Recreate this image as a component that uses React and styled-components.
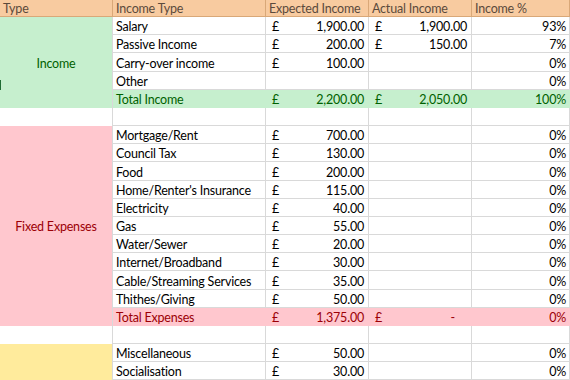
import React from "react";
import styled, { createGlobalStyle, css } from "styled-components";

const Global = createGlobalStyle`
  html, body { margin: 0; padding: 0; background: #fff; overflow: hidden; }
  body { font-family: Lato, "Liberation Sans", sans-serif; }
`;

const tones = {
  none: { bg: "#ffffff", fg: "#000000", line: "#d9d9d9" },
  good: { bg: "#c6efce", fg: "#006100", line: "#c6efce" },
  bad: { bg: "#ffc7ce", fg: "#9c0006", line: "#ffc7ce" },
  neutral: { bg: "#ffeb9c", fg: "#9c5700", line: "#ffeb9c" },
};

// Spreadsheet rows are ~18.17px tall; round each boundary to whole pixels.
const ROW_H = 18.17;
const HEAD_H = 17;
const rowTracks = Array.from({ length: 21 }, (_, k) => {
  const top = Math.round(HEAD_H + ROW_H * k);
  const bottom = Math.round(HEAD_H + ROW_H * (k + 1));
  return `${bottom - top}px`;
}).join(" ");

const Frame = styled.div`
  width: 570px;
  height: 380px;
  overflow: hidden;
`;

const Sheet = styled.div`
  display: grid;
  grid-template-columns: 113px 153px 103px 103px 98px;
  grid-template-rows: ${HEAD_H}px ${rowTracks};
  width: 570px;
  font-size: 12.5px;
  letter-spacing: -0.2px;
  color: #000;
`;

const HeaderCell = styled.div`
  box-sizing: border-box;
  background: #f8cba0;
  color: #5b4a3c;
  border-right: 1px solid #d9a878;
  border-bottom: 1px solid #d9a878;
  padding: 1px 3px 0;
  display: flex;
  align-items: center;
  white-space: nowrap;
  overflow: hidden;
`;

const TypeCell = styled.div`
  position: relative;
  box-sizing: border-box;
  grid-column: 1;
  grid-row: ${(p) => p.$row} / span ${(p) => p.$span};
  background: ${(p) => tones[p.$tone].bg};
  color: ${(p) => tones[p.$tone].fg};
  border-right: 1px solid #d9d9d9;
  padding-top: 1px;
  display: flex;
  align-items: center;
  justify-content: center;
  white-space: nowrap;
  ${(p) =>
    p.$marker &&
    css`
      &::before {
        content: "";
        position: absolute;
        left: 0;
        top: ${p.$marker}px;
        width: 1px;
        height: 10px;
        background: #1f6b34;
      }
    `}
`;

const Cell = styled.div`
  box-sizing: border-box;
  background: ${(p) => tones[p.$tone].bg};
  color: ${(p) => tones[p.$tone].fg};
  border-right: 1px solid ${(p) => tones[p.$tone].line};
  border-bottom: 1px solid ${(p) => tones[p.$tone].line};
  padding: 2px 3px 0;
  display: flex;
  align-items: center;
  justify-content: ${(p) => (p.$right ? "flex-end" : "flex-start")};
  white-space: nowrap;
  overflow: hidden;
`;

const Money = styled(Cell)`
  justify-content: space-between;
  padding: 2px 4px 0 6px;
`;

const Dash = styled.span`
  padding-right: 12px;
`;

const MoneyCell = ({ value, tone }) => (
  <Money $tone={tone}>
    {value !== null && value !== undefined ? (
      <>
        <span>£</span>
        {value === "-" ? <Dash>-</Dash> : <span>{value}</span>}
      </>
    ) : null}
  </Money>
);

const Row = ({ label, expected, actual, pct, tone = "none" }) => (
  <>
    <Cell $tone={tone}>{label}</Cell>
    <MoneyCell value={expected} tone={tone} />
    <MoneyCell value={actual} tone={tone} />
    <Cell $tone={tone} $right>
      {pct}
    </Cell>
  </>
);

const income = [
  { label: "Salary", expected: "1,900.00", actual: "1,900.00", pct: "93%" },
  { label: "Passive Income", expected: "200.00", actual: "150.00", pct: "7%" },
  { label: "Carry-over income", expected: "100.00", pct: "0%" },
  { label: "Other", pct: "0%" },
  { label: "Total Income", expected: "2,200.00", actual: "2,050.00", pct: "100%", tone: "good" },
];

const fixed = [
  { label: "Mortgage/Rent", expected: "700.00", pct: "0%" },
  { label: "Council Tax", expected: "130.00", pct: "0%" },
  { label: "Food", expected: "200.00", pct: "0%" },
  { label: "Home/Renter's Insurance", expected: "115.00", pct: "0%" },
  { label: "Electricity", expected: "40.00", pct: "0%" },
  { label: "Gas", expected: "55.00", pct: "0%" },
  { label: "Water/Sewer", expected: "20.00", pct: "0%" },
  { label: "Internet/Broadband", expected: "30.00", pct: "0%" },
  { label: "Cable/Streaming Services", expected: "35.00", pct: "0%" },
  { label: "Thithes/Giving", expected: "50.00", pct: "0%" },
  { label: "Total Expenses", expected: "1,375.00", actual: "-", pct: "0%", tone: "bad" },
];

const variable = [
  { label: "Miscellaneous", expected: "50.00", pct: "0%" },
  { label: "Socialisation", expected: "30.00", pct: "0%" },
];

export default function App() {
  return (
    <>
      <Global />
      <Frame>
        <Sheet>
          <HeaderCell>Type</HeaderCell>
          <HeaderCell>Income Type</HeaderCell>
          <HeaderCell>Expected Income</HeaderCell>
          <HeaderCell>Actual Income</HeaderCell>
          <HeaderCell>Income %</HeaderCell>

          <TypeCell $row={2} $span={5} $tone="good" $marker={63}>
            Income
          </TypeCell>
          {income.map((r) => (
            <Row key={r.label} {...r} />
          ))}

          <TypeCell $row={7} $span={1} $tone="none" />
          <Row label="" />

          <TypeCell $row={8} $span={11} $tone="bad">
            Fixed Expenses
          </TypeCell>
          {fixed.map((r) => (
            <Row key={r.label} {...r} />
          ))}

          <TypeCell $row={19} $span={1} $tone="none" />
          <Row label="" />

          <TypeCell $row={20} $span={3} $tone="neutral" />
          {variable.map((r, i) => (
            <Row key={i} {...r} />
          ))}
          <Row label="" />
        </Sheet>
      </Frame>
    </>
  );
}
